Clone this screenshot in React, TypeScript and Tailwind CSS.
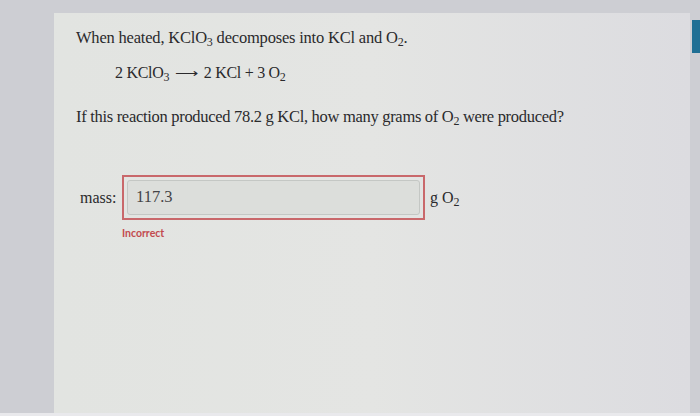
import React from 'react'

const serif = { fontFamily: '"Liberation Serif", "Times New Roman", serif' }

function Sub({ children }: { children: React.ReactNode }) {
  return <sub className="text-[12px] relative top-[3px]">{children}</sub>
}

export default function App() {
  return (
    <div className="w-[700px] h-[416px] overflow-hidden bg-[#cdced3] flex flex-col">
      <div className="flex flex-1 pt-[13px] pl-[54px]">
        <div
          className="w-[636px] h-[400px] bg-gradient-to-r from-[#e2e4e1] via-[#e4e5e3] to-[#dcdce0] text-[#2a2a2c] pl-[22px] pt-[14px]"
          style={serif}
        >
          <p className="text-[16.5px] leading-[22px] tracking-[-0.2px]">
            When heated, KClO<Sub>3</Sub> decomposes into KCl and O<Sub>2</Sub>.
          </p>
          <p className="text-[16px] leading-[22px] mt-[13px] pl-[39px] tracking-[-0.3px]">
            2&nbsp;KClO<Sub>3</Sub>
            <span className="mx-[8px] text-[13px] inline-block scale-x-125">⟶</span>2&nbsp;KCl + 3&nbsp;O<Sub>2</Sub>
          </p>
          <p className="text-[16.5px] leading-[22px] mt-[21px] tracking-[-0.3px]">
            If this reaction produced 78.2 g KCl, how many grams of O<Sub>2</Sub> were produced?
          </p>

          <div className="flex items-center mt-[47px] pl-[4px]">
            <span className="text-[16px] w-[42px]">mass:</span>
            <div className="w-[303px] h-[45px] border-2 border-[#c9686b] p-[3px]">
              <div className="w-full h-full bg-[#dcdedb] border border-[#c4c7c4] rounded-[3px] flex items-center pl-[8px] text-[16.5px] text-[#444446]">
                117.3
              </div>
            </div>
            <span className="text-[16px] ml-[5px]">
              g O<Sub>2</Sub>
            </span>
          </div>
          <div
            className="ml-[46px] mt-[6px] text-[10.5px] font-bold text-[#c24a4e]"
            style={{ fontFamily: 'Lato, "Open Sans", sans-serif' }}
          >
            Incorrect
          </div>
        </div>
        <div className="ml-[2px] mt-[7px] w-[8px] h-[33px] bg-[#1f6f94]" />
      </div>
      <div className="h-[3px] bg-[#e9e9ec]" />
    </div>
  )
}
